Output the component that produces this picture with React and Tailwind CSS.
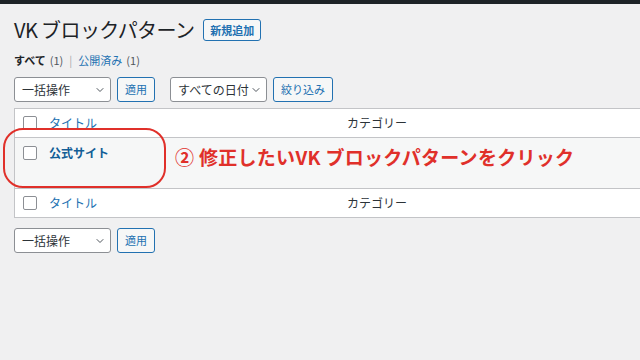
import { ChevronDown } from "lucide-react";

const FONT = { fontFamily: '"Noto Sans CJK JP", "Noto Sans", sans-serif' };

function Select({ label, w }) {
  return (
    <div className={`h-[25px] ${w} bg-white border border-[#8c8f94] rounded-[3px] flex items-center justify-between pl-[7px] pr-[4px] text-[12px] text-[#2c3338] whitespace-nowrap`}>
      <span>{label}</span>
      <ChevronDown size={12} strokeWidth={2} className="text-[#50575e] shrink-0" />
    </div>
  );
}

function Btn({ label }) {
  return (
    <div className="h-[25px] px-[7px] bg-[#f6f7f7] border border-[#2271b1] rounded-[3px] flex items-center text-[11px] text-[#2271b1]">
      {label}
    </div>
  );
}

function Check() {
  return <div className="w-[14px] h-[14px] border border-[#8c8f94] rounded-[2px] bg-white shrink-0" />;
}

function HeadRow({ border }) {
  return (
    <div className={`h-[29px] flex items-center bg-white pl-[8px] ${border}`}>
      <Check />
      <div className="w-[310px] pl-[12px] text-[12px] text-[#2271b1]">タイトル</div>
      <div className="text-[12px] text-[#2c3338]">カテゴリー</div>
    </div>
  );
}

export default function App() {
  return (
    <div className="w-[640px] h-[360px] bg-[#f0f0f1] relative overflow-hidden" style={FONT}>
      <div className="h-[4px] bg-[#1d2327]" />
      <div className="pl-[14px]">
        <div className="flex items-center gap-[9px] mt-[11px] h-[30px]">
          <h1 className="text-[20px] text-[#1d2327] tracking-[-0.6px]">VK ブロックパターン</h1>
          <div className="h-[22px] px-[6px] border border-[#2271b1] bg-[#f6f7f7] rounded-[3px] flex items-center text-[11px] font-bold text-[#2271b1]">
            新規追加
          </div>
        </div>
        <div className="mt-[6px] h-[18px] flex items-center text-[11px]">
          <span className="font-bold text-[#1d2327]">すべて</span>
          <span className="text-[#50575e] ml-1">(1)</span>
          <span className="text-[#a7aaad] mx-[6px]">|</span>
          <span className="text-[#2271b1]">公開済み</span>
          <span className="text-[#50575e] ml-1">(1)</span>
        </div>
        <div className="mt-[8px] flex items-center h-[25px]">
          <Select label="一括操作" w="w-[97px]" />
          <div className="ml-[6px]"><Btn label="適用" /></div>
          <div className="ml-[15px]"><Select label="すべての日付" w="w-[97px]" /></div>
          <div className="ml-[6px]"><Btn label="絞り込み" /></div>
        </div>
        <div className="mt-[6px] w-[660px] border border-[#c3c4c7] bg-white">
          <HeadRow border="border-b border-[#c3c4c7]" />
          <div className="h-[50px] bg-[#f6f7f7] flex items-start pt-[8px] pl-[8px]">
            <Check />
            <div className="pl-[12px] text-[12px] font-bold text-[#135e96] leading-[14px]">公式サイト</div>
          </div>
          <HeadRow border="border-t border-[#c3c4c7]" />
        </div>
        <div className="mt-[10px] flex items-center h-[25px]">
          <Select label="一括操作" w="w-[97px]" />
          <div className="ml-[6px]"><Btn label="適用" /></div>
        </div>
      </div>
      <div className="absolute left-[3px] top-[128px] w-[163px] h-[60px] border-2 border-[#e0302a] rounded-[20px]" />
      <div className="absolute left-[175px] top-[144px] text-[19px] font-bold text-[#e0302a] leading-[26px] tracking-[0.3px]">
        ② 修正したいVK ブロックパターンをクリック
      </div>
    </div>
  );
}
